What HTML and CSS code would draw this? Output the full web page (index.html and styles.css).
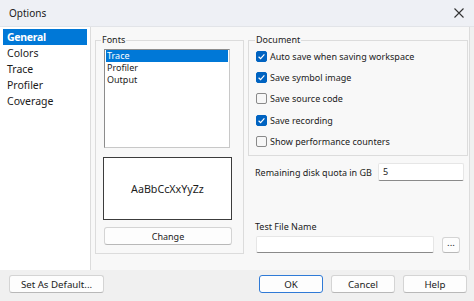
FILE: index.html
```html
<!DOCTYPE html>
<html lang="en">

<head>
  <meta charset="UTF-8" />
  <meta name="viewport" content="width=device-width, initial-scale=1.0" />
  <title>Options</title>
  <link rel="stylesheet" href="styles.css">
</head>

<body>
  <div class="dialog">
    <header class="titlebar">
      <span class="title">Options</span>
      <svg class="close" width="10" height="10" viewBox="0 0 10 10">
        <path d="M0.5 0.5 L9.5 9.5 M9.5 0.5 L0.5 9.5" stroke="#333" stroke-width="1.1" fill="none" />
      </svg>
    </header>

    <div class="main">
      <ul class="nav">
        <li class="selected">General</li>
        <li>Colors</li>
        <li>Trace</li>
        <li>Profiler</li>
        <li>Coverage</li>
      </ul>

      <div class="panel">
        <fieldset class="group fonts">
          <legend>Fonts</legend>
          <ul class="listbox">
            <li class="selected">Trace</li>
            <li>Profiler</li>
            <li>Output</li>
          </ul>
          <div class="preview">AaBbCcXxYyZz</div>
          <button class="btn change">Change</button>
        </fieldset>

        <div class="right">
          <fieldset class="group document">
            <legend>Document</legend>
            <label class="check"><span class="box on"><svg width="9" height="9" viewBox="0 0 9 9"><path d="M1.6 4.7 L3.6 6.6 L7.4 2.4" stroke="#fff" stroke-width="1.2" fill="none" /></svg></span>Auto save when saving workspace</label>
            <label class="check"><span class="box on"><svg width="9" height="9" viewBox="0 0 9 9"><path d="M1.6 4.7 L3.6 6.6 L7.4 2.4" stroke="#fff" stroke-width="1.2" fill="none" /></svg></span>Save symbol image</label>
            <label class="check"><span class="box"></span>Save source code</label>
            <label class="check"><span class="box on"><svg width="9" height="9" viewBox="0 0 9 9"><path d="M1.6 4.7 L3.6 6.6 L7.4 2.4" stroke="#fff" stroke-width="1.2" fill="none" /></svg></span>Save recording</label>
            <label class="check"><span class="box"></span>Show performance counters</label>
          </fieldset>

          <div class="quota">
            <span class="text">Remaining disk quota in GB</span>
            <div class="field quota-field">5</div>
          </div>

          <div class="testfile">
            <span class="text">Test File Name</span>
            <div class="file-row">
              <div class="field file-field"></div>
              <button class="btn dots">...</button>
            </div>
          </div>
        </div>
      </div>
    </div>

    <footer class="footer">
      <button class="btn default-btn">Set As Default...</button>
      <div class="actions">
        <button class="btn primary">OK</button>
        <button class="btn">Cancel</button>
        <button class="btn">Help</button>
      </div>
    </footer>
  </div>
</body>

</html>
```

FILE: styles.css
```css
* {
  padding: 0;
  margin: 0;
  box-sizing: border-box;
  font-family: "Noto Sans", "Open Sans", sans-serif;
}

body {
  background: #f0f0f0;
}

.dialog {
  width: 474px;
  height: 301px;
  display: flex;
  flex-direction: column;
  background: #f0f0f0;
  color: #1b1b1b;
  font-size: 9px;
  overflow: hidden;
}

.titlebar {
  height: 27px;
  display: flex;
  align-items: center;
  justify-content: space-between;
  padding: 0 10px 0 9px;
  background: #eef0f5;
  border-bottom: 1px solid #e2e4e8;
}

.title {
  font-size: 10px;
  color: #1a1a1a;
}

.main {
  height: 243px;
  display: flex;
}

.nav {
  list-style: none;
  width: 90px;
  background: #fff;
  padding: 2px 3px 0 3px;
  font-size: 10.5px;
}

.nav li {
  height: 16px;
  line-height: 16px;
  padding-left: 4px;
}

.nav li.selected {
  background: #0078d7;
  color: #fff;
  font-weight: 700;
  letter-spacing: -0.3px;
}

.panel {
  width: 380px;
  display: flex;
  background: #f8f8f8;
  border-left: 1px solid #dcdcdc;
  border-right: 1px solid #dcdcdc;
  padding: 7px 1px 0 4px;
}

.group {
  border: 1px solid #dcdcdc;
}

.group legend {
  font-size: 9px;
  line-height: 12px;
  padding: 0 1px;
}

.fonts {
  width: 149px;
  height: 220px;
  padding: 3px 10px 8px 8px;
  display: flex;
  flex-direction: column;
}

.fonts legend {
  margin-left: -3px;
}

.listbox {
  list-style: none;
  width: 126px;
  height: 99px;
  background: #fff;
  border: 1px solid #8c8c8c;
  border-right-color: #c8c8c8;
  border-bottom-color: #c8c8c8;
  padding: 0 1px;
}

.listbox li {
  height: 12px;
  line-height: 12px;
  padding-left: 1px;
}

.listbox li.selected {
  background: #0078d7;
  color: #fff;
}

.preview {
  margin-top: 9px;
  width: 129px;
  height: 63px;
  margin-left: -1px;
  background: #fff;
  border: 1px solid #3c3c3c;
  display: flex;
  align-items: center;
  justify-content: center;
  font-size: 10.7px;
}

.btn {
  font-family: inherit;
  font-size: 9.7px;
  color: #1b1b1b;
  background: #fdfdfd;
  border: 1px solid #d4d4d4;
  border-bottom-color: #b8b8b8;
  border-radius: 3px;
  height: 18px;
}

.change {
  margin-top: 7px;
  width: 128px;
  font-size: 9px;
}

.right {
  width: 220px;
  margin-left: 4px;
  display: flex;
  flex-direction: column;
}

.document {
  height: 122px;
  padding: 0 0 4px 7px;
}

.document legend {
  margin-left: -1px;
}

.check {
  display: flex;
  align-items: center;
  height: 21.2px;
  gap: 3px;
  white-space: nowrap;
}

.box {
  width: 11px;
  height: 11px;
  border: 1px solid #8a8a8a;
  border-radius: 2px;
  background: #f7f7f7;
  display: flex;
  align-items: center;
  justify-content: center;
}

.box.on {
  background: #0063c1;
  border-color: #0063c1;
}

.quota {
  margin-top: 7px;
  display: flex;
  align-items: center;
  justify-content: space-between;
  padding: 0 4px 0 7px;
  white-space: nowrap;
}

.field {
  background: #fff;
  border: 1px solid #e6e6e6;
  border-bottom: 1px solid #8a8a8a;
  border-radius: 2px;
}

.quota-field {
  width: 86px;
  height: 18px;
  line-height: 16px;
  padding-left: 4px;
}

.testfile {
  margin-top: 39px;
  padding-left: 7px;
}

.testfile .text {
  display: block;
  height: 14px;
  line-height: 14px;
}

.file-row {
  margin-top: 2px;
  padding-left: 1px;
  display: flex;
  align-items: center;
  gap: 8px;
}

.file-field {
  width: 178px;
  height: 17px;
}

.dots {
  width: 18px;
  height: 16px;
  line-height: 10px;
  padding-bottom: 4px;
}

.footer {
  flex: 1;
  display: flex;
  justify-content: space-between;
  align-items: flex-start;
  padding: 5px 7px 0 9px;
}

.default-btn {
  width: 95px;
}

.actions {
  display: flex;
  gap: 8px;
}

.actions .btn {
  width: 64px;
}

.btn.primary {
  border-color: #2f7ad6;
}
```
